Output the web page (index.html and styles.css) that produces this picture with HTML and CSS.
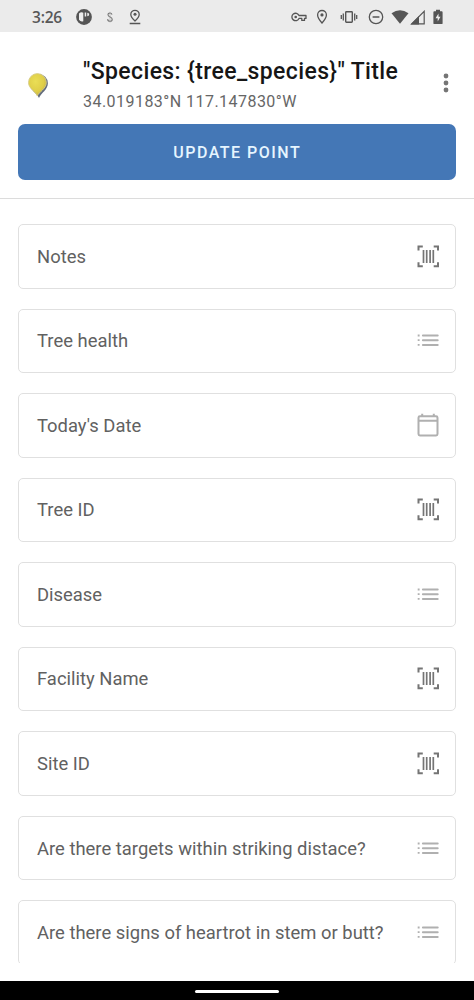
FILE: index.html
```
<!DOCTYPE html>
<html lang="en">
<head>
<meta charset="utf-8">
<title>Update point</title>
<link rel="stylesheet" href="styles.css">
</head>
<body>
<svg class="sprite" width="0" height="0" aria-hidden="true">
  <symbol id="barcode" viewBox="0 0 27 27">
    <path d="M3.500 7.500V3.600H7.800M18.700 3.600h4.300v3.900M23 19.200v4h-4.300M7.800 23.200H3.500v-4" fill="none" stroke="currentColor" stroke-width="2"/>
    <path d="M8.500 7v13M11.700 7v13M15.100 7v13M18.300 7v13" fill="none" stroke="currentColor" stroke-width="1.700"/>
  </symbol>
  <symbol id="list" viewBox="0 0 27 27">
    <path d="M7.900 8.500H22.700M7.900 13.200H22.700M7.900 17.900H22.700" fill="none" stroke="currentColor" stroke-width="2" stroke-linecap="round"/>
    <path d="M2.700 8.500h1.900M2.700 13.200h1.900M2.700 17.900h1.900" stroke="currentColor" stroke-width="1.800"/>
  </symbol>
  <symbol id="calendar" viewBox="0 0 27 27">
    <rect x="3.500" y="4.300" width="19" height="19.200" rx="1.400" fill="none" stroke="currentColor" stroke-width="2"/>
    <path d="M3.500 8.800h19M7.200 4V1.700M18.800 4V1.700" fill="none" stroke="currentColor" stroke-width="2"/>
  </symbol>
</svg>
<div class="screen">
  <div class="status">
    <span class="clock">3:26</span>
    <svg class="i-app" viewBox="0 0 16 16"><circle cx="8" cy="8" r="7.900" fill="#555"/><path d="M3 4.500Q5 2.700 7.300 3.700v8.600Q4.600 13.200 3 10.800zM8.700 3.600h1.500v4H8.700zM11.300 3.800q1.900.1 1.900 1.700t-1.900 1.700z" fill="#eee"/></svg>
    <svg class="i-s" viewBox="0 0 8 12"><path d="M6 3.600C5.700 2.500 5 2 4 2 2.700 2 2 2.700 2 3.700c0 2.500 4.200 2 4.200 4.500 0 1.300-.9 2.100-2.200 2.100-1.400 0-2.300-.8-2.400-2.200" fill="none" stroke="#777" stroke-width="1.100"/><path d="M4 .8v10.700" stroke="#999" stroke-width=".5"/></svg>
    <svg class="i-pinbase" viewBox="0 0 12 16"><path d="M6 12C3.300 9.600 1.800 7.500 1.800 5.500a4.200 4.200 0 0 1 8.400 0C10.200 7.500 8.700 9.600 6 12zM.7 14.500h10.600" fill="none" stroke="#555" stroke-width="1.300"/><circle cx="6" cy="5.300" r="1.500" fill="#555"/></svg>
    <div class="tray">
      <svg class="i-key" viewBox="0 0 16 10"><path d="M8 3.500h7v2.900h-1.500v2h-2.700v-2H8A3.700 3.700 0 1 1 8 3.500z" fill="none" stroke="#555" stroke-width="1.300" stroke-linejoin="round"/><circle cx="4.700" cy="5" r="1.300" fill="#555"/></svg>
      <svg class="i-pin" viewBox="0 0 12 16"><path d="M6 14C3.200 10.700 1.600 8.200 1.600 5.900a4.400 4.400 0 0 1 8.800 0C10.400 8.200 8.800 10.700 6 14z" fill="none" stroke="#555" stroke-width="1.300"/><circle cx="6" cy="5.900" r="1.600" fill="#555"/></svg>
      <svg class="i-vib" viewBox="0 0 18 14"><rect x="5.700" y="1.700" width="6.600" height="10.600" rx=".7" fill="none" stroke="#555" stroke-width="1.400"/><path d="M3.300 3.500v7M1.300 5v4M14.700 3.500v7M16.700 5v4" stroke="#555" stroke-width="1.300"/></svg>
      <svg class="i-dnd" viewBox="0 0 16 16"><circle cx="8" cy="8" r="6.700" fill="none" stroke="#555" stroke-width="1.300"/><path d="M4.600 8h6.800" stroke="#555" stroke-width="1.500"/></svg>
      <svg class="i-wifi" viewBox="0 0 18 14"><path d="M.5 3.200Q9-2.800 17.500 3.200L9 13.800z" fill="#555"/></svg>
      <svg class="i-sig" viewBox="0 0 16 15"><path d="M1.700 13.800L14.200 1.300v12.500z" fill="none" stroke="#555" stroke-width="1.200"/><path d="M.5 14.400L9 5.900v8.500z" fill="#555"/></svg>
      <svg class="i-bat" viewBox="0 0 10 16"><path d="M3 .8h4v1.500h1.700q.9 0 .9.900v11q0 .9-.9.900H1.300q-.9 0-.9-.9v-11q0-.9.900-.9H3z" fill="#555"/><path d="M5.500 4.400L2.500 9.200h2.200v3.400L7.500 7.800H5.500z" fill="#eee"/></svg>
    </div>
  </div>
  <header class="header">
    <div class="heading">
      <svg class="marker" viewBox="0 0 24 30">
        <defs>
          <radialGradient id="gold" cx=".4" cy=".35" r=".75"><stop offset="0" stop-color="#eade56"/><stop offset=".6" stop-color="#dfce48"/><stop offset="1" stop-color="#bda83d"/></radialGradient>
          <filter id="soft" x="-30%" y="-30%" width="160%" height="160%"><feGaussianBlur stdDeviation=".7"/></filter>
        </defs>
        <path d="M13 28C11.500 23.500 3.500 20 3.500 13.200a9.200 9.200 0 0 1 18.400 0C21.900 19.500 15 23 13 28z" fill="#485366" opacity=".85" filter="url(#soft)"/>
        <path d="M11.300 26C10 21.800 2.500 18.700 2.500 12.500a8.900 8.900 0 0 1 17.800 0C20.300 18.700 13 21.800 11.300 26z" fill="url(#gold)" stroke="#d6cc8a" stroke-width=".9"/>
      </svg>
      <div class="titles">
        <h1 class="title">"Species: {tree_species}" Title</h1>
        <p class="coords">34.019183°N 117.147830°W</p>
      </div>
      <svg class="more" viewBox="0 0 6 20"><g fill="#757575"><circle cx="3" cy="3" r="2.400"/><circle cx="3" cy="10" r="2.400"/><circle cx="3" cy="17" r="2.400"/></g></svg>
    </div>
    <button class="update">UPDATE POINT</button>
  </header>
  <main class="fields">
    <div class="field"><span>Notes</span><svg class="icon dark"><use href="#barcode"/></svg></div>
    <div class="field"><span>Tree health</span><svg class="icon"><use href="#list"/></svg></div>
    <div class="field"><span>Today's Date</span><svg class="icon"><use href="#calendar"/></svg></div>
    <div class="field"><span>Tree ID</span><svg class="icon dark"><use href="#barcode"/></svg></div>
    <div class="field"><span>Disease</span><svg class="icon"><use href="#list"/></svg></div>
    <div class="field"><span>Facility Name</span><svg class="icon dark"><use href="#barcode"/></svg></div>
    <div class="field"><span>Site ID</span><svg class="icon dark"><use href="#barcode"/></svg></div>
    <div class="field"><span>Are there targets within striking distace?</span><svg class="icon"><use href="#list"/></svg></div>
    <div class="field"><span>Are there signs of heartrot in stem or butt?</span><svg class="icon"><use href="#list"/></svg></div>
  </main>
  <div class="gap"></div>
  <footer class="navbar"><div class="handle"></div></footer>
</div>
</body>
</html>
```
FILE: styles.css
```
* { box-sizing: border-box; }
body { margin: 0; background: #fff; font-family: Roboto, "Liberation Sans", sans-serif; }
.sprite { display: block; }
.screen { width: 474px; height: 1000px; display: flex; flex-direction: column; overflow: hidden; }
svg { flex: none; display: block; }

.status { height: 32px; flex: none; display: flex; align-items: center; padding: 2px 31px 0 32px; background: #ebebeb; }
.clock { width: 44px; font: 600 15.500px/20px "Open Sans", sans-serif; letter-spacing: -0.200px; color: #585858; white-space: nowrap; }
.i-app { width: 16px; height: 16px; }
.i-s { width: 8px; height: 12px; margin-left: 14px; }
.i-pinbase { width: 12px; height: 16px; margin-left: 15px; }
.tray { display: flex; align-items: center; margin-left: auto; }
.i-key { width: 16px; height: 10px; }
.i-pin { width: 12px; height: 16px; margin-left: 9px; }
.i-vib { width: 18px; height: 14px; margin-left: 12px; }
.i-dnd { width: 16px; height: 16px; margin-left: 10px; }
.i-wifi { width: 18px; height: 14px; margin-left: 7px; }
.i-sig { width: 16px; height: 15px; margin-left: 1px; }
.i-bat { width: 10px; height: 16px; margin-left: 7px; }

.header { height: 167px; flex: none; padding: 24px 18px 0; border-bottom: 1.500px solid #dcdcdc; }
.heading { height: 68px; display: flex; align-items: flex-start; }
.marker { width: 24px; height: 30px; margin: 14px 0 0 8px; }
.titles { margin-left: 33px; padding-top: 1px; white-space: nowrap; }
.title { margin: 0; font-size: 23px; line-height: 30px; font-weight: 500; letter-spacing: 0.380px; color: #161616; }
.coords { margin: 4px 0 0; font-size: 16px; line-height: 22px; letter-spacing: 0.460px; color: #666; }
.more { width: 6px; height: 20px; margin: 17px 7px 0 auto; }
.update { display: block; width: 437.500px; height: 56px; margin: 0; padding: 1px 0 0 1px; border: 0; border-radius: 7px; background: #4477b6; color: #e6f5ff; font: 500 16px/55px Roboto, sans-serif; letter-spacing: 1.500px; }

.fields { height: 764px; flex: none; padding: 25px 18px 0; display: flex; flex-direction: column; gap: 20.050px; overflow: hidden; }
.field { height: 64.500px; flex: none; width: 437.500px; padding: 0 13px 0 18px; display: flex; align-items: center; justify-content: space-between; border: 1.500px solid #e0e0e0; border-radius: 5px; font-size: 18.400px; letter-spacing: 0.015px; color: #616161; }
.icon { width: 27px; height: 27px; color: #b0b0b0; }
.icon.dark { color: #757575; }
.gap { height: 18px; flex: none; }
.navbar { height: 19px; flex: none; display: flex; align-items: center; justify-content: center; padding-top: 2px; background: #000; }
.handle { width: 84px; height: 3px; border-radius: 2px; background: #fff; }
```
